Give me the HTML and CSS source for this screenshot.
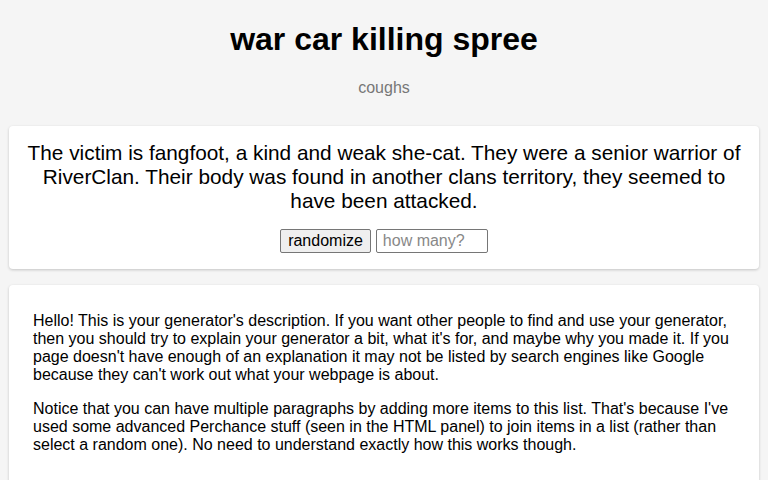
FILE: index.html
```html
<!DOCTYPE html>
<html>
<head>
<meta charset="utf-8">
<link rel="stylesheet" href="styles.css">
</head>
<body>
<h1 class="title">war car killing spree</h1>
<p class="subtitle">coughs</p>
<div class="card output-card">
  <div class="output">The victim is fangfoot, a kind and weak she-cat. They were a senior warrior of RiverClan. Their body was found in another clans territory, they seemed to have been attacked.</div>
  <div class="controls">
    <button class="btn">randomize</button>
    <input class="count" type="text" placeholder="how many?">
  </div>
</div>
<div class="card desc-card">
  <p>Hello! This is your generator's description. If you want other people to find and use your generator, then you should try to explain your generator a bit, what it's for, and maybe why you made it. If you page doesn't have enough of an explanation it may not be listed by search engines like Google because they can't work out what your webpage is about.</p>
  <p>Notice that you can have multiple paragraphs by adding more items to this list. That's because I've used some advanced Perchance stuff (seen in the HTML panel) to join items in a list (rather than select a random one). No need to understand exactly how this works though.</p>
</div>
</body>
</html>
```
FILE: styles.css
```css
html, body {
  margin: 0;
  background: #f5f5f5;
}
body {
  padding: 0 9px;
  font-family: "Liberation Sans", Arial, sans-serif;
  color: #000;
}
.title {
  font-size: 32px;
  font-weight: bold;
  text-align: center;
  margin: 21px 0 0;
  line-height: 37px;
}
.subtitle {
  text-align: center;
  color: #777;
  font-size: 16px;
  line-height: 18px;
  margin: 21px 0 0;
}
.card {
  background: #fff;
  border-radius: 4px;
  box-shadow: 0 1px 3px rgba(0,0,0,0.2);
}
.output-card {
  margin-top: 29px;
  padding: 15px 16px 16px;
  text-align: center;
}
.output {
  font-size: 20.8px;
  line-height: 24px;
}
.controls {
  margin-top: 16px;
  display: flex;
  justify-content: center;
  gap: 5px;
}
.btn {
  font-family: "Liberation Sans", Arial, sans-serif;
  font-size: 16px;
  height: 24px;
  padding: 0 7px;
  background: #efefef;
  border: 1px solid #767676;
  border-radius: 2px;
  color: #000;
}
.count {
  font-family: "Liberation Sans", Arial, sans-serif;
  font-size: 16px;
  width: 112px;
  height: 24px;
  box-sizing: border-box;
  padding: 0 6px;
  border: 1px solid #767676;
  border-radius: 2px;
}
.count::placeholder {
  color: #888;
}
.desc-card {
  margin-top: 16px;
  padding: 11px 24px 16px;
}
.desc-card p {
  font-size: 16px;
  line-height: 18px;
  margin: 16px 0;
}
```
